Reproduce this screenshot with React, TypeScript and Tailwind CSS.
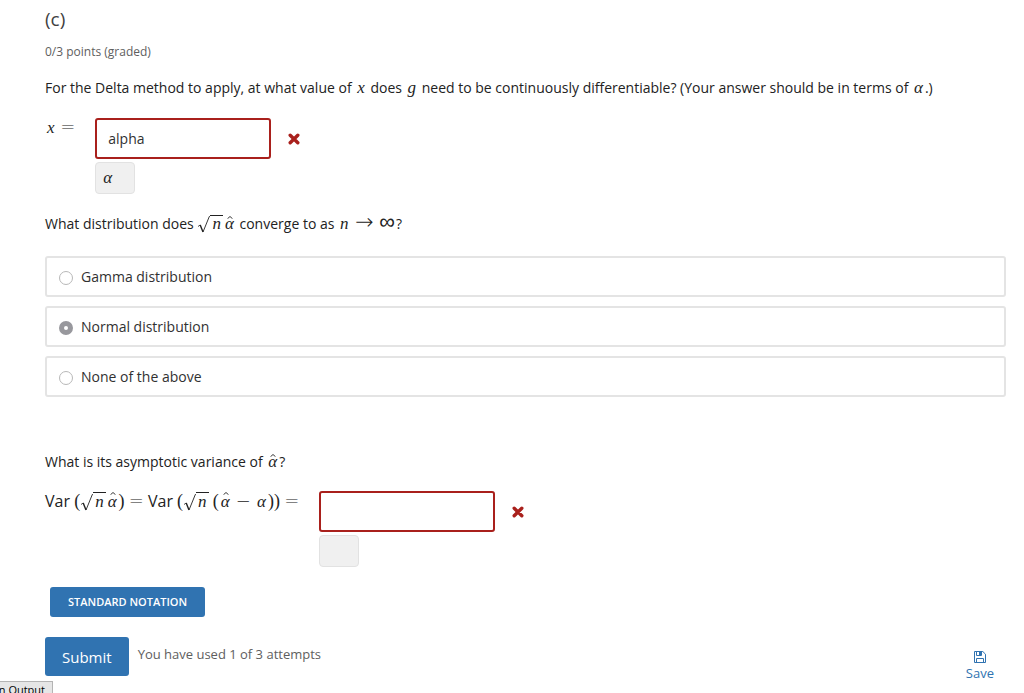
import type { ReactNode } from "react";

const distributions = [
  { id: "gamma", label: "Gamma distribution" },
  { id: "normal", label: "Normal distribution" },
  { id: "none", label: "None of the above" },
];

function Var({ children }: { children: ReactNode }) {
  return <i className="px-0.5 font-['Liberation_Serif',serif] text-[17px] leading-4">{children}</i>;
}

// parentheses
function Paren({ children }: { children: ReactNode }) {
  return <span className="font-['Liberation_Serif',serif] text-lg leading-4">{children}</span>;
}

// relations
function Op({ children }: { children: ReactNode }) {
  return <span className="font-['DejaVu_Sans_Light','DejaVu_Sans',sans-serif] text-lg leading-4 font-extralight">{children}</span>;
}

// arrows and infinity
function WideOp({ children }: { children: ReactNode }) {
  return <span className="px-px font-['DejaVu_Sans_Light','DejaVu_Sans',sans-serif] text-[22px] leading-3 font-extralight">{children}</span>;
}

function AlphaHat() {
  return (
    <span className="relative">
      <Var>α</Var>
      <svg className="absolute top-0.5 left-1 h-[3px] w-[6px]" viewBox="0 0 6 3" fill="none" stroke="currentColor">
        <path d="M0.5 2.7 3 0.5 5.5 2.7" strokeWidth="0.9" />
      </svg>
    </span>
  );
}

function Root({ children }: { children: ReactNode }) {
  return (
    <span className="whitespace-nowrap">
      <svg className="inline-block h-[17px] w-[13px] align-[-4px]" viewBox="0 0 13 17" fill="none" stroke="currentColor">
        <path d="M1 10.5 3.2 9" strokeWidth="0.8" />
        <path d="M3.2 9 6 16" strokeWidth="1.4" />
        <path d="M6 16 12.3 0.5H13" strokeWidth="0.9" />
      </svg>
      <span className="inline-block border-t border-current leading-4">
        <Var>{children}</Var>
      </span>
    </span>
  );
}

function Incorrect() {
  return (
    <svg className="h-3 w-3" viewBox="0 0 12 12" role="img" aria-label="incorrect">
      <path d="M2.2 2.2 9.8 9.8M9.8 2.2 2.2 9.8" stroke="#a9201c" strokeWidth="3.4" strokeLinecap="round" />
    </svg>
  );
}

function MathInput({ id, value, preview }: { id: string; value: string; preview?: ReactNode }) {
  return (
    <div>
      <div className="flex items-center gap-[17px]">
        <input
          id={id}
          type="text"
          defaultValue={value}
          className="h-[41px] w-44 rounded-[3px] border-2 border-[#a9201c] bg-white px-[11px] text-sm text-[#313131] outline-none"
        />
        <Incorrect />
      </div>
      <div className="mt-[3px] flex h-8 w-10 items-center rounded border border-[#e2e2e2] bg-[#f0f0f0] px-[5px]">
        {preview}
      </div>
    </div>
  );
}

export default function App() {
  return (
    <div className="relative overflow-hidden bg-white pt-[7px] pr-[18px] pb-[11px] pl-[45px] font-['Open_Sans',sans-serif] text-sm leading-5 text-[#222]">
      <h3 className="text-[19px] leading-6 text-[#414141]">(c)</h3>
      <p className="mt-[9px] text-xs leading-6 text-[#5e5e5e]">0/3 points (graded)</p>

      <p className="mt-[14px]">
        For the Delta method to apply, at what value of <Var>x</Var> does <Var>g</Var> need to be continuously
        differentiable? (Your answer should be in terms of <Var>α</Var>.)
      </p>

      <div className="mt-5 flex gap-5">
        <label htmlFor="point" className="whitespace-nowrap">
          <Var>x</Var> <Op>=</Op>
        </label>
        <MathInput id="point" value="alpha" preview={<Var>α</Var>} />
      </div>

      <p className="mt-5">
        What distribution does <Root>n</Root>
        <AlphaHat /> converge to as <Var>n</Var> <WideOp>→</WideOp> <WideOp>∞</WideOp>?
      </p>

      <fieldset className="mt-[22px] flex flex-col gap-[9px]">
        {distributions.map((d) => (
          <label
            key={d.id}
            htmlFor={d.id}
            className="flex h-[41px] items-center gap-2 rounded-[3px] border-2 border-[#e4e4e4] px-3 text-[#313131]"
          >
            <input
              id={d.id}
              type="radio"
              name="distribution"
              defaultChecked={d.id === "normal"}
              className="mt-0.5 h-[14px] w-[14px] appearance-none rounded-full border border-[#b8b8b8] bg-white checked:border-[5px] checked:border-[#98989d]"
            />
            {d.label}
          </label>
        ))}
      </fieldset>

      <p className="mt-[55px]">
        What is its asymptotic variance of <AlphaHat />?
      </p>

      <div className="mt-[19px] flex gap-5">
        <label htmlFor="variance" className="text-base leading-5 whitespace-nowrap">
          Var <Paren>(</Paren>
          <Root>n</Root>
          <AlphaHat />
          <Paren>)</Paren> <Op>=</Op> Var <Paren>(</Paren>
          <Root>n</Root> <Paren>(</Paren>
          <AlphaHat /> <Op>−</Op> <Var>α</Var>
          <Paren>))</Paren> <Op>=</Op>
        </label>
        <MathInput id="variance" value="" />
      </div>

      <button
        type="button"
        className="mt-5 ml-[5px] block h-[30px] rounded-[3px] bg-[#3073b1] px-[18px] text-[11px] font-semibold text-white uppercase"
      >
        Standard Notation
      </button>

      <div className="mt-5 flex items-start justify-between">
        <div className="flex items-start gap-[9px]">
          <button type="submit" className="h-[39px] rounded-[3px] bg-[#3073b1] px-[17px] text-[15px] text-white">
            Submit
          </button>
          <span className="mt-[7px] text-[13px] text-[#5e5e5e]">You have used 1 of 3 attempts</span>
        </div>
        <button type="button" className="mt-[14px] mr-3 flex flex-col items-center text-[13px] leading-5 text-[#3073b1]">
          <svg className="h-3 w-3" viewBox="0 0 12 12" fill="none" stroke="currentColor">
            <path d="M0.5 0.5H8.8L11.5 3.2V11.5H0.5Z" />
            <path d="M2.5 11.5V7.5H9.5V11.5M2.5 0.5V4.5H7.5V0.5" />
            <path d="M5 1H7V4H5Z" fill="currentColor" stroke="none" />
          </svg>
          Save
        </button>
      </div>

      <button
        type="button"
        className="fixed top-[681px] -left-16 w-[117px] border border-[#b4b4b4] bg-[#e6e6e6] pr-[7px] text-right text-[11px] leading-4 text-black"
      >
        Open Output
      </button>
    </div>
  );
}
